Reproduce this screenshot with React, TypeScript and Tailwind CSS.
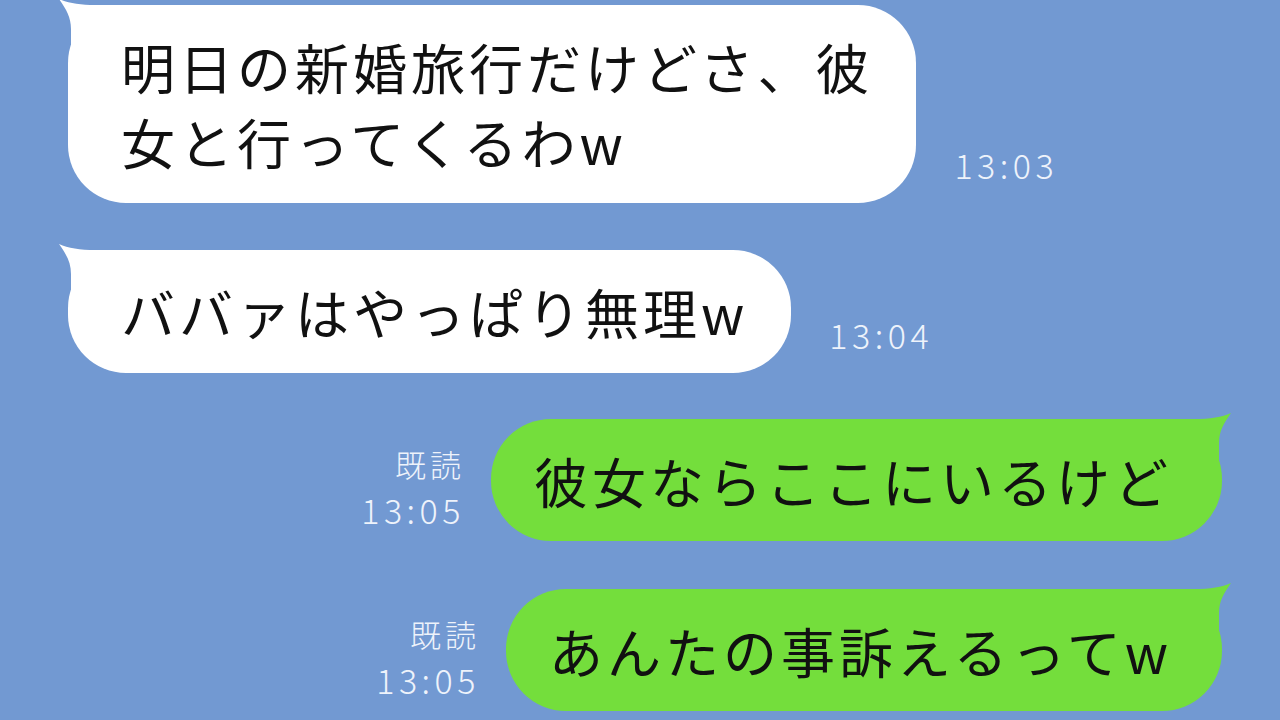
const JP = { fontFamily: '"Noto Sans CJK JP", "Noto Sans", sans-serif' };

// 吹き出しの角: 右上向きの形を一つだけ描き、左側は反転して使う
function Tail({ side, color }: { side: "left" | "right"; color: string }) {
  return (
    <svg
      aria-hidden="true"
      width="72"
      height="60"
      viewBox="0 0 72 60"
      className={
        side === "right"
          ? "absolute -right-[12px] -top-[6px]"
          : "absolute -left-[12px] -top-[6px] -scale-x-100"
      }
    >
      <path
        d="M0 6 L33 6 C48 6 60 4 69 0 C62 10 57 18 57 30 L57 56 L0 56 Z"
        fill={color}
      />
    </svg>
  );
}

function Time({ children }: { children: string }) {
  return (
    <span className="text-[34px] font-light leading-none tracking-[4.5px] text-[#eef3fb]">
      {children}
    </span>
  );
}

function Read({ time }: { time: string }) {
  return (
    <div className="mb-[14px] flex flex-col items-end gap-[14px] text-[#eef3fb]">
      <span className="text-[31px] font-light leading-none tracking-[4px]">既読</span>
      <Time>{time}</Time>
    </div>
  );
}

function Incoming({ lines, time }: { lines: string[]; time: string }) {
  return (
    <div className="flex items-end gap-[38px] pl-[68px]">
      <div className="relative rounded-[58px] bg-white py-[24px] pl-[53px] pr-[43px]">
        <Tail side="left" color="#ffffff" />
        <p className="relative text-[54px] leading-[75px] tracking-[4px] text-[#111]">
          {lines.map((l, i) => (
            <span key={i} className="block">
              {l}
            </span>
          ))}
        </p>
      </div>
      <div className="mb-[19px]">
        <Time>{time}</Time>
      </div>
    </div>
  );
}

function Outgoing({ text, time }: { text: string; time: string }) {
  return (
    <div className="flex items-end justify-end gap-[26px] pr-[58px]">
      <Read time={time} />
      <div className="relative rounded-[60px] bg-[#74de3c] py-[23.5px] pl-[43px] pr-[50px]">
        <Tail side="right" color="#74de3c" />
        <p className="relative text-[54px] leading-[75px] tracking-[4px] text-[#111]">{text}</p>
      </div>
    </div>
  );
}

export default function App() {
  return (
    <div
      className="flex h-[720px] w-[1280px] flex-col overflow-hidden bg-[#7299d2] pt-[5px]"
      style={JP}
    >
      <Incoming lines={["明日の新婚旅行だけどさ、彼", "女と行ってくるわw"]} time="13:03" />
      <div className="mt-[47px]">
        <Incoming lines={["ババァはやっぱり無理w"]} time="13:04" />
      </div>
      <div className="mt-[46px]">
        <Outgoing text="彼女ならここにいるけど" time="13:05" />
      </div>
      <div className="mt-[48px]">
        <Outgoing text="あんたの事訴えるってw" time="13:05" />
      </div>
    </div>
  );
}
